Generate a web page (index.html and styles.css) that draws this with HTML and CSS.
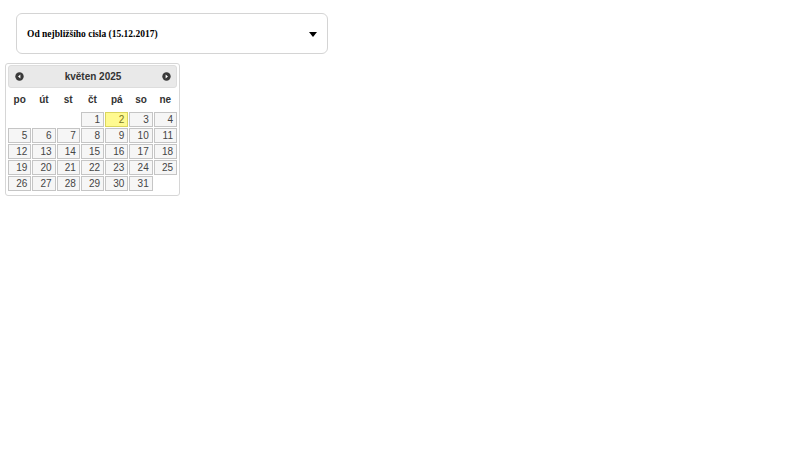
FILE: index.html
```html
<!DOCTYPE html>
<html lang="cs">
<head>
<meta charset="utf-8">
<title>Datepicker</title>
<link rel="stylesheet" href="styles.css">
</head>
<body>
<div class="field">
  <span class="field-text">Od nejbližšího cisla (15.12.2017)</span>
  <span class="caret"></span>
</div>

<div class="datepicker">
  <div class="dp-header">
    <span class="dp-nav">
      <svg width="9" height="9" viewBox="0 0 9 9"><circle cx="4.5" cy="4.5" r="4.2" fill="#3a3a3a"/><path d="M5.4 2.6 L3 4.5 L5.4 6.4 Z" fill="#ffffff"/></svg>
    </span>
    <span class="dp-title">květen 2025</span>
    <span class="dp-nav">
      <svg width="9" height="9" viewBox="0 0 9 9"><circle cx="4.5" cy="4.5" r="4.2" fill="#3a3a3a"/><path d="M3.6 2.6 L6 4.5 L3.6 6.4 Z" fill="#ffffff"/></svg>
    </span>
  </div>
  <div class="dp-grid">
    <span class="dp-dow">po</span>
    <span class="dp-dow">út</span>
    <span class="dp-dow">st</span>
    <span class="dp-dow">čt</span>
    <span class="dp-dow">pá</span>
    <span class="dp-dow">so</span>
    <span class="dp-dow">ne</span>

    <span class="dp-empty"></span>
    <span class="dp-empty"></span>
    <span class="dp-empty"></span>
    <span class="dp-day">1</span>
    <span class="dp-day dp-today">2</span>
    <span class="dp-day">3</span>
    <span class="dp-day">4</span>

    <span class="dp-day">5</span>
    <span class="dp-day">6</span>
    <span class="dp-day">7</span>
    <span class="dp-day">8</span>
    <span class="dp-day">9</span>
    <span class="dp-day">10</span>
    <span class="dp-day">11</span>

    <span class="dp-day">12</span>
    <span class="dp-day">13</span>
    <span class="dp-day">14</span>
    <span class="dp-day">15</span>
    <span class="dp-day">16</span>
    <span class="dp-day">17</span>
    <span class="dp-day">18</span>

    <span class="dp-day">19</span>
    <span class="dp-day">20</span>
    <span class="dp-day">21</span>
    <span class="dp-day">22</span>
    <span class="dp-day">23</span>
    <span class="dp-day">24</span>
    <span class="dp-day">25</span>

    <span class="dp-day">26</span>
    <span class="dp-day">27</span>
    <span class="dp-day">28</span>
    <span class="dp-day">29</span>
    <span class="dp-day">30</span>
    <span class="dp-day">31</span>
    <span class="dp-empty"></span>
  </div>
</div>
</body>
</html>
```

FILE: styles.css
```css
html, body {
  margin: 0;
  padding: 0;
  background: #ffffff;
}

body {
  position: relative;
  width: 800px;
  height: 450px;
  overflow: hidden;
}

.field {
  box-sizing: border-box;
  margin: 13px 0 0 16px;
  width: 312px;
  height: 41px;
  border: 1px solid #d4d4d4;
  border-radius: 6px;
  display: flex;
  align-items: center;
  justify-content: space-between;
  padding: 0 10px 0 10px;
  font-family: "Liberation Serif", "Times New Roman", serif;
  font-weight: bold;
  font-size: 9.5px;
  color: #000000;
}

.caret {
  width: 0;
  height: 0;
  border-left: 4px solid transparent;
  border-right: 4px solid transparent;
  border-top: 5px solid #000000;
  margin-top: 1px;
}

.datepicker {
  position: absolute;
  left: 5px;
  top: 63px;
  box-sizing: border-box;
  width: 175px;
  padding: 1px 2px 4px;
  border: 1px solid #d6d6d6;
  border-radius: 3px;
  background: #ffffff;
  font-family: "Liberation Sans", Arial, sans-serif;
  font-size: 10px;
  color: #333333;
}

.dp-header {
  box-sizing: border-box;
  height: 23px;
  border: 1px solid #dddddd;
  border-radius: 3px;
  background: #e9e9e9;
  display: flex;
  align-items: center;
  justify-content: space-between;
  padding: 0 5px 0 6px;
}

.dp-title {
  font-weight: bold;
  font-size: 10px;
  color: #333333;
}

.dp-nav {
  display: flex;
  width: 9px;
  height: 9px;
}

.dp-grid {
  display: grid;
  grid-template-columns: repeat(7, 1fr);
  grid-template-rows: 23px repeat(5, 15px);
  column-gap: 1px;
  row-gap: 1px;
}

.dp-dow {
  display: flex;
  align-items: center;
  justify-content: center;
  font-weight: bold;
  font-size: 10px;
  color: #333333;
  margin-bottom: 1px;
}

.dp-day {
  box-sizing: border-box;
  border: 1px solid #c5c5c5;
  background: #f6f6f6;
  color: #454545;
  font-size: 10px;
  text-align: right;
  padding: 0 3px 0 0;
  line-height: 13px;
}

.dp-today {
  border-color: #dad55e;
  background: #fffa90;
  color: #777620;
}
```
